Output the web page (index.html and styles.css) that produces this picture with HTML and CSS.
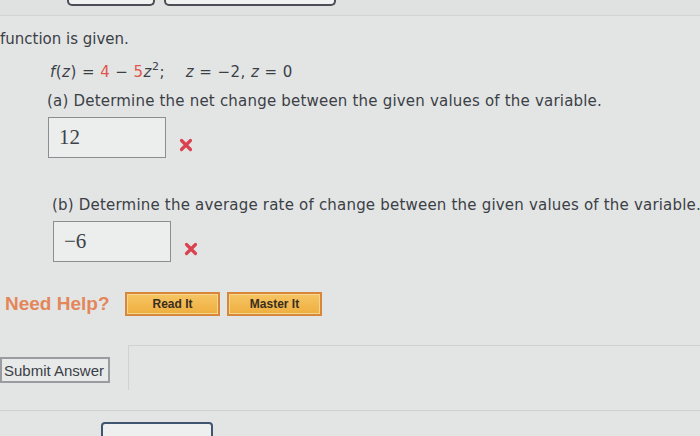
FILE: index.html
```html
<!DOCTYPE html>
<html>
<head>
<meta charset="utf-8">
<link rel="stylesheet" href="styles.css">
</head>
<body>
<div class="page">
  <div class="topbar">
    <div class="tab tab-a"></div>
    <div class="tab tab-b"></div>
  </div>
  <div class="content">
    <p class="intro">function is given.</p>
    <p class="formula"><i>f</i>(<i>z</i>) = <span class="red">4</span> − <span class="red">5</span><i>z</i><sup>2</sup>;&nbsp;&nbsp;&nbsp; <i>z</i> = −2, <i>z</i> = 0</p>
    <p class="q qa">(a) Determine the net change between the given values of the variable.</p>
    <div class="answer-row ra">
      <div class="answer">12</div>
      <svg class="xmark" width="14" height="14" viewBox="0 0 14 14"><path d="M2.5 2.5 L11.5 11.5 M11.5 2.5 L2.5 11.5" stroke="#d9434f" stroke-width="3.2" stroke-linecap="round"/></svg>
    </div>
    <p class="q qb">(b) Determine the average rate of change between the given values of the variable.</p>
    <div class="answer-row rb">
      <div class="answer">−6</div>
      <svg class="xmark" width="14" height="14" viewBox="0 0 14 14"><path d="M2.5 2.5 L11.5 11.5 M11.5 2.5 L2.5 11.5" stroke="#d9434f" stroke-width="3.2" stroke-linecap="round"/></svg>
    </div>
    <div class="help-row">
      <span class="need">Need Help?</span>
      <button class="help-btn">Read It</button>
      <button class="help-btn">Master It</button>
    </div>
  </div>
  <div class="submit-area">
    <div class="submit-cell"><button class="submit">Submit Answer</button></div>
    <div class="submit-rest"></div>
  </div>
  <div class="bottom">
    <div class="bottom-box"></div>
  </div>
</div>
</body>
</html>
```
FILE: styles.css
```css
html, body {
  margin: 0;
  padding: 0;
}
body {
  background: #e3e5e5;
  font-family: "DejaVu Sans", Verdana, sans-serif;
  color: #3b4045;
  width: 700px;
  height: 436px;
  overflow: hidden;
}
.page {
  height: 436px;
  overflow: hidden;
}
.topbar {
  height: 15px;
  border-bottom: 1px solid #d2d4d4;
  display: flex;
  padding-left: 67px;
  gap: 9px;
  background: #e0e2e1;
}
.tab {
  height: 4px;
  border: 2px solid #4a4f55;
  border-top: none;
  border-radius: 0 0 5px 5px;
  background: #f0f1f1;
}
.tab-a { width: 84px; }
.tab-b { width: 168px; }
.content {
  padding-top: 1px;
}
p { margin: 0; white-space: nowrap; }
.intro {
  font-size: 15px;
  margin-top: 13px;
  margin-left: 0;
}
.formula {
  font-size: 15px;
  margin-top: 15px;
  margin-left: 50px;
  letter-spacing: 0.45px;
}
.formula i { font-style: italic; }
.formula sup { font-size: 11px; line-height: 0; vertical-align: 7px; }
.red { color: #e0574d; }
.q {
  font-size: 15px;
  letter-spacing: 0.2px;
}
.qa { margin-top: 11px; margin-left: 47px; }
.qb { margin-top: 38px; margin-left: 52px; }
.answer-row {
  display: flex;
  align-items: center;
  margin-top: 7px;
}
.ra { margin-left: 48px; }
.rb { margin-left: 53px; }
.answer {
  width: 106px;
  height: 39px;
  border: 1px solid #8a8e90;
  background: #eceeee;
  font-family: "Liberation Serif", "Times New Roman", serif;
  font-size: 21px;
  line-height: 38px;
  padding-left: 10px;
  color: #3d4247;
}
.xmark {
  margin-left: 13px;
  margin-top: 14px;
}
.help-row {
  display: flex;
  align-items: center;
  margin-top: 30px;
  margin-left: 5px;
}
.need {
  font-family: "Liberation Sans", Arial, sans-serif;
  font-weight: bold;
  font-size: 19px;
  color: #e3875a;
  width: 120px;
}
.help-btn {
  font-family: "Liberation Sans", Arial, sans-serif;
  font-weight: bold;
  font-size: 12px;
  color: #3a2e1e;
  background: linear-gradient(#f6c563, #eeae3f);
  border: 2px solid #d8873a;
  box-shadow: inset 0 0 0 1px #f8d890;
  height: 24px;
  width: 95px;
  padding: 0;
  margin-right: 7px;
}
.submit-area {
  display: flex;
  margin-top: 29px;
  height: 45px;
}
.submit-cell {
  width: 128px;
  padding-top: 12px;
}
.submit-rest {
  flex: 1;
  border-top: 1px solid #cfd2d2;
  border-left: 1px solid #cfd2d2;
}
.submit {
  font-family: "Liberation Sans", Arial, sans-serif;
  font-size: 15px;
  color: #3b4045;
  background: #e8eaea;
  border: 2px solid #9a9d9f;
  height: 26px;
  width: 110px;
  padding: 0 0 0 2px;
  text-align: left;
}
.bottom {
  margin-top: 20px;
  border-top: 1px solid #cfd2d2;
  height: 24px;
  padding-left: 101px;
  padding-top: 11px;
  overflow: hidden;
}
.bottom-box {
  width: 108px;
  height: 20px;
  border: 2px solid #3f5570;
  border-radius: 4px;
  background: #eef0f0;
}
```
